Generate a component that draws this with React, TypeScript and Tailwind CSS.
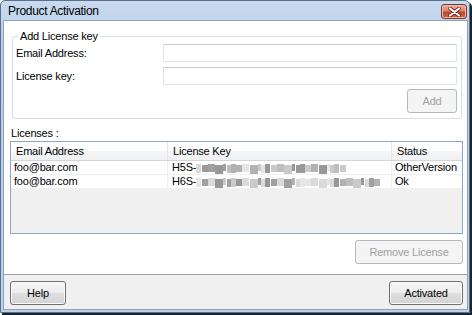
import clsx from "clsx";

const font = { fontFamily: '"Liberation Sans", Arial, sans-serif' };

type BtnProps = { label: string; disabled?: boolean; className?: string };

const Btn = ({ label, disabled, className }: BtnProps) => (
  <button
    className={clsx(
      "h-[24px] rounded-[3px] border text-[11px] tracking-[-0.2px] leading-none",
      disabled
        ? "border-[#b5b9bc] bg-[#f4f4f4] text-[#a0a0a0]"
        : "border-[#707070] bg-[linear-gradient(#f6f6f6_0%,#ececec_50%,#dfdfdf_50%,#d3d3d3_100%)] text-black shadow-[inset_0_0_0_1px_#fafafa]",
      className
    )}
  >
    {label}
  </button>
);

const TextBox = () => (
  <div className="h-[18px] flex-1 border border-[#e2e3ea] border-t-[#c6c8cf] bg-white" />
);

// pixelated, blurred-out part of a license key
const Smudge = ({ seed, width }: { seed: number; width: number }) => {
  const blocks: { x: number; w: number; y: number; h: number; c: string }[] = [];
  let s = seed;
  let x = 0;
  const shades = ["#b2b2b2", "#cacaca", "#a0a0a0", "#dadada", "#bebebe", "#989898", "#e6e6e6"];
  while (x < width) {
    s = (s * 9301 + 49297) % 233280;
    const w = 3 + (s % 6);
    const c = shades[s % shades.length];
    blocks.push({ x, w, y: 2 + (s % 2), h: 7 + (s % 3), c });
    x += w + (s % 4 === 0 ? 1 : 0);
  }
  return (
    <svg width={width} height={12} className="blur-[0.7px]">
      {blocks.map((b, i) => (
        <rect key={i} x={b.x} y={b.y} width={b.w} height={b.h} fill={b.c} />
      ))}
    </svg>
  );
};

const rows = [
  { email: "foo@bar.com", key: "H5S-", smudge: 150, seed: 7, status: "OtherVersion" },
  { email: "foo@bar.com", key: "H6S-", smudge: 184, seed: 31, status: "Ok" },
];

const CloseIcon = () => (
  <svg width="13" height="10" viewBox="0 0 13 10">
    <path d="M2 1.5 L11 8.5 M11 1.5 L2 8.5" stroke="#5e1f14" strokeWidth="3.6" strokeLinecap="round" />
    <path d="M2 1.5 L11 8.5 M11 1.5 L2 8.5" stroke="#ffffff" strokeWidth="2.2" strokeLinecap="round" />
  </svg>
);

export default function App() {
  return (
    <div className="w-[472px] h-[315px] bg-white overflow-hidden" style={font}>
      <div className="w-[470px] h-[313px] flex flex-col rounded-t-[5px] border border-[#5d7089] bg-[linear-gradient(#c8daef,#b9cfe8_40px,#bcd1ea)] pl-[2px] pr-[1px] pb-[2px] shadow-[2px_2px_0_0_#1b2530]">
        {/* title bar */}
        <div className="h-[19px] flex items-center justify-between pl-[5px] pr-[1px]">
          <span className="text-[12px] tracking-[-0.3px] text-black leading-none">Product Activation</span>
          <div className="mt-[2px] w-[26px] h-[15px] flex items-center justify-center rounded-[3px] border border-[#7b3a2f] bg-[linear-gradient(#eab3a4,#d98470_45%,#c4442b_55%,#d4694f)] shadow-[inset_0_0_0_1px_#efb9a9]">
            <CloseIcon />
          </div>
        </div>

        {/* client area */}
        <div className="flex-1 flex flex-col border border-[#8ea3bb] bg-white text-[11px] tracking-[-0.2px] text-black">
          <div className="flex flex-col">
            {/* Add License key group */}
            <div className="relative ml-[8px] mr-[5px] mt-[15px] rounded-[3px] border border-[#d5dfe5] pt-[7px] pl-[3px] pr-[4px] pb-[5px]">
              <span className="absolute -top-[8px] left-[5px] bg-white px-[2px] leading-[14px]">Add License key</span>
              <div className="flex flex-col gap-[5px]">
                <div className="flex items-center">
                  <span className="w-[147px] leading-[14px]">Email Address:</span>
                  <TextBox />
                </div>
                <div className="flex items-center">
                  <span className="w-[147px] leading-[14px]">License key:</span>
                  <TextBox />
                </div>
                <div className="flex justify-end mt-[-1px]">
                  <Btn label="Add" disabled className="w-[50px]" />
                </div>
              </div>
            </div>

            <span className="ml-[7px] mt-[7px] leading-[14px]">Licenses :</span>

            {/* list view */}
            <div className="ml-[6px] mr-[4px] mt-[1px] h-[93px] flex flex-col border border-[#8ea6c4] bg-[#f0f0f0]">
              <div className="flex h-[19px] border-b border-[#d5d5d5] bg-[linear-gradient(#ffffff,#ffffff_50%,#f5f6f7_50%,#eef0f2)]">
                <div className="w-[157px] pl-[5px] flex items-center border-r border-[#e3e6ea]">Email Address</div>
                <div className="w-[224px] pl-[5px] flex items-center border-r border-[#e3e6ea]">License Key</div>
                <div className="flex-1 pl-[5px] flex items-center">Status</div>
              </div>
              {rows.map((r, i) => (
                <div key={i} className="flex h-[14px] bg-white border-b border-[#f0f0f0]">
                  <div className="w-[157px] pl-[3px] flex items-center border-r border-[#f0f0f0] leading-none">{r.email}</div>
                  <div className="w-[224px] pl-[4px] flex items-center border-r border-[#f0f0f0] leading-none">
                    <span>{r.key}</span>
                    <Smudge seed={r.seed} width={r.smudge} />
                  </div>
                  <div className="flex-1 pl-[3px] flex items-center leading-none">{r.status}</div>
                </div>
              ))}
            </div>

            <div className="flex justify-end mr-[4px] mt-[6px]">
              <Btn label="Remove License" disabled className="w-[108px]" />
            </div>
          </div>

          <div className="mt-[10px] border-t border-[#a0a0a0] flex-1 bg-[#f0f0f0] flex items-start justify-between pl-[6px] pr-[4px] pt-[6px]">
            <Btn label="Help" className="w-[56px]" />
            <Btn label="Activated" className="w-[74px]" />
          </div>
        </div>
      </div>
    </div>
  );
}
